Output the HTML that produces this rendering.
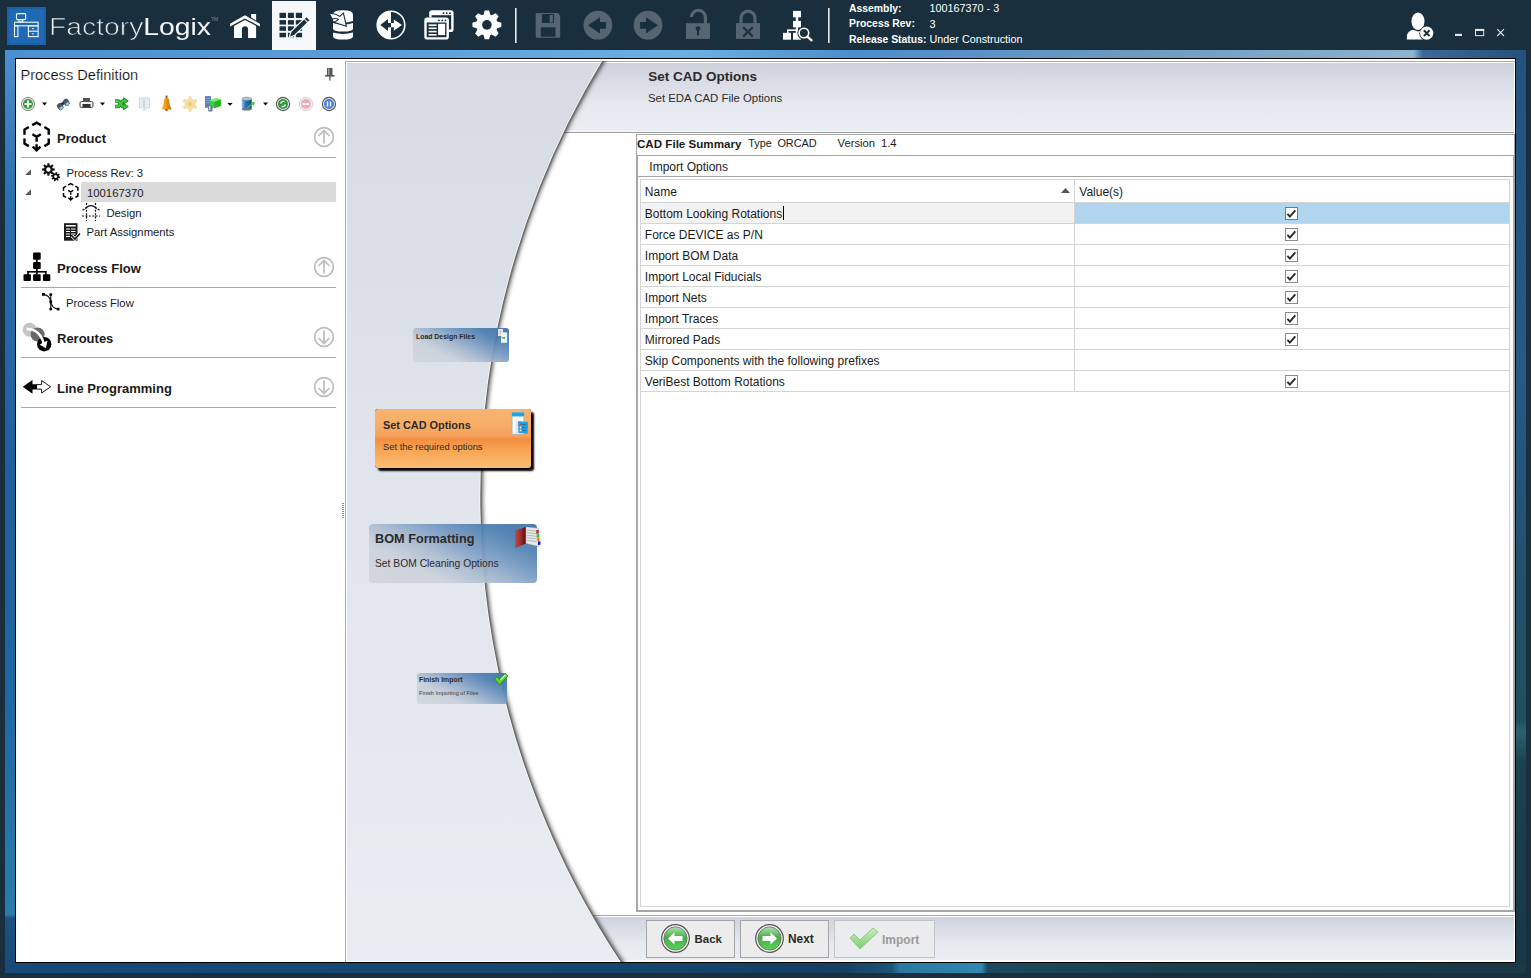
<!DOCTYPE html>
<html><head><meta charset="utf-8">
<style>
html,body{margin:0;padding:0;}
body{width:1531px;height:978px;overflow:hidden;position:relative;background:#1a2f3e;font-family:"Liberation Sans",sans-serif;}
.a{position:absolute;}
.t{position:absolute;line-height:1;white-space:nowrap;font-family:"Liberation Sans",sans-serif;}
.b{font-weight:bold;}
#win{left:15px;top:58px;width:1499px;height:903px;border:1px solid #000;background:#fff;}
.sep{position:absolute;height:1px;background:#a8a8a8;}
.tx{color:#1a1a1a;}
</style></head><body>
<!-- title bar -->
<div class="a" style="left:5px;top:50px;width:1521px;height:8px;background:linear-gradient(90deg,#4a8fd0 0%,#5ea3dc 30%,#6db0e0 45%,#4d8ccb 56%,#6d9cc0 75%,#8db3cf 92.6%,#3a6a98 93.2%,#24507c 100%)"></div>
<div class="a" style="left:5px;top:58px;width:10px;height:915px;background:linear-gradient(180deg,#4a8ed0 0%,#2a6fb0 15%,#1f5f9f 45%,#1f68a0 70%,#2a7cac 93.6%,#1a5283 94%,#174a78 100%)"></div>
<div class="a" style="left:1516px;top:58px;width:10px;height:915px;background:linear-gradient(180deg,#24527f 0%,#265a87 35%,#22506e 55%,#20505e 72.5%,#2a6272 73.5%,#1c4250 77%,#183646 100%)"></div>
<div class="a" style="left:5px;top:963px;width:1521px;height:10px;background:linear-gradient(90deg,#174a78 0%,#164670 40%,#173f62 55%,#1c5478 58.3%,#2a78a0 58.8%,#3288b0 64.2%,#1c4a5c 64.6%,#1a3c4c 80%,#1a3846 100%)"></div>
<div class="a" id="win"></div>


<svg class="a" style="left:0;top:0" width="1531" height="50" viewBox="0 0 1531 50">
 <!-- logo -->
 <rect x="7" y="7" width="39" height="38" fill="#1d5fa8"/>
 <rect x="9" y="9" width="35" height="34" fill="#1f69b3"/>
 <g fill="none" stroke="#f2f6fa" stroke-width="1.1">
  <rect x="16.5" y="13.6" width="9.2" height="6" rx="1"/>
  <rect x="19" y="19.6" width="3.6" height="2.3"/>
  <rect x="14.5" y="22.2" width="23.6" height="3.6"/>
  <rect x="14.5" y="25.8" width="3.4" height="10.8"/>
  <rect x="28.4" y="25.8" width="9.7" height="10.8"/>
  <line x1="28.4" y1="31.2" x2="38.1" y2="31.2"/>
 </g>
 <rect x="32" y="28.2" width="2" height="0.9" fill="#e8eef6"/>
 <rect x="32" y="33.4" width="2" height="0.9" fill="#e8eef6"/>
 <!-- active button -->
 <rect x="272" y="1" width="44" height="49" fill="#f7f8fb"/>
 <!-- home -->
 <g fill="#fff">
  <path d="M230 23.8 L244.9 15.2 L259.9 23.8 L259.9 26.4 L244.9 18.6 L230 26.4 Z"/>
  <path d="M251.1 13.9 L256.1 13.9 L256.1 20.4 L251.1 17.6 Z"/>
  <path d="M234 25.9 L244.9 20 L256.1 25.9 L256.1 37.9 L248.1 37.9 L248.1 29.3 A3.1 3.1 0 0 0 241.9 29.3 L241.9 37.9 L234 37.9 Z"/>
 </g>
 <!-- grid edit -->
 <g fill="#1a2f3e"><rect x="279.5" y="12.8" width="6.5" height="5.2"/><rect x="287.9" y="12.8" width="6.0" height="5.2"/><rect x="295.8" y="12.8" width="6.3" height="5.2"/><rect x="279.5" y="20.1" width="6.5" height="4.5"/><rect x="287.9" y="20.1" width="6.0" height="4.5"/><rect x="295.8" y="20.1" width="6.3" height="4.5"/><rect x="279.5" y="26.3" width="6.5" height="4.5"/><rect x="287.9" y="26.3" width="6.0" height="4.5"/><rect x="295.8" y="26.3" width="6.3" height="4.5"/><rect x="279.5" y="32.8" width="6.5" height="4.5"/><rect x="287.9" y="32.8" width="6.0" height="4.5"/><rect x="295.8" y="32.8" width="6.3" height="4.5"/></g>
 <path d="M290.00 36.60 L291.61 31.77 L304.21 19.57 L306.99 22.43 L294.39 34.63 Z" fill="#1a2f3e" stroke="#f8f9fb" stroke-width="2.4" stroke-linejoin="round"/>
 <path d="M304.92 18.87 L306.50 17.34 L309.29 20.20 L307.71 21.74 Z" fill="#1a2f3e" stroke="#f8f9fb" stroke-width="1.6" stroke-linejoin="round"/>
 <path d="M290.00 36.60 L291.61 31.77 L304.21 19.57 L306.99 22.43 L294.39 34.63 Z" fill="#1a2f3e"/>
 <path d="M304.92 18.87 L306.50 17.34 L309.29 20.20 L307.71 21.74 Z" fill="#1a2f3e"/>
 <!-- database -->
 <g fill="#fff">
  <path d="M333 14.5 Q333 10.2 343 10.2 Q353 10.2 353 14.5 L353 21 Q348 22.8 343 22.8 L333 21 Z"/>
  <path d="M333 23 Q338 24.8 343 24.8 Q348 24.8 353 23 L353 28.8 Q353 31.6 343 31.6 Q333 31.6 333 28.8 Z"/>
  <path d="M333 32.6 Q338 34 343 34 Q348 34 353 32.6 L353 36.2 Q353 39.6 343 39.6 Q333 39.6 333 36.2 Z"/>
 </g>
 <path d="M329.2 13.6 Q335 12.8 339.8 16.4 L343.4 12.8 L346.4 26.3 L334.6 22.4 L338.6 19.4 Q335.4 17.6 332.4 19.2 Z" fill="#fff" stroke="#1a2f3e" stroke-width="1.1" stroke-linejoin="round"/>
 <!-- arrows circle -->
 <circle cx="391" cy="25" r="13.8" fill="#1a2f3e" stroke="#fff" stroke-width="1.6"/>
 <path d="M391 11.2 A13.8 13.8 0 0 0 391 38.8 Z" fill="#fff"/>
 <path d="M380.3 25 L388 19 L388 23.1 L391 23.1 L391 27.2 L388 27.2 L388 31 Z" fill="#1a2f3e"/>
 <path d="M402 25 L393.8 19.4 L393.8 23.1 L391 23.1 L391 27.2 L393.8 27.2 L393.8 30.8 Z" fill="#fff"/>
 <!-- windows -->
 <g fill="none" stroke="#fff">
  <rect x="430.4" y="11.4" width="22" height="19.4" rx="1.6" stroke-width="2.4"/>
 </g>
 <rect x="424.3" y="17.5" width="24.6" height="22.1" rx="2" fill="#1a2f3e"/>
 <rect x="425.5" y="18.7" width="22.2" height="19.7" rx="1.6" fill="none" stroke="#fff" stroke-width="2.4"/>
 <rect x="425.5" y="18.7" width="22.2" height="3.8" fill="#fff"/>
 <rect x="430.4" y="11.4" width="22" height="3.8" fill="#fff"/>
 <g fill="#1a2f3e"><circle cx="443.6" cy="13.2" r="0.9"/><circle cx="446.8" cy="13.2" r="0.9"/><circle cx="450" cy="13.2" r="0.9"/>
 <circle cx="439" cy="20.4" r="0.9"/><circle cx="442.2" cy="20.4" r="0.9"/><circle cx="445.4" cy="20.4" r="0.9"/></g>
 <g fill="#fff"><rect x="428.6" y="24.4" width="8" height="1.6"/><rect x="428.6" y="27.5" width="8" height="1.6"/><rect x="428.6" y="30.8" width="8" height="1.6"/><rect x="428.6" y="34" width="8" height="1.6"/><rect x="438.1" y="23.8" width="7" height="11.3"/></g>
 <!-- gear -->
 <path d="M483.61 14.61 L484.72 10.46 L489.08 10.46 L490.19 14.61 L491.84 15.30 L495.57 13.15 L498.65 16.23 L496.50 19.96 L497.19 21.61 L501.34 22.72 L501.34 27.08 L497.19 28.19 L496.50 29.84 L498.65 33.57 L495.57 36.65 L491.84 34.50 L490.19 35.19 L489.08 39.34 L484.72 39.34 L483.61 35.19 L481.96 34.50 L478.23 36.65 L475.15 33.57 L477.30 29.84 L476.61 28.19 L472.46 27.08 L472.46 22.72 L476.61 21.61 L477.30 19.96 L475.15 16.23 L478.23 13.15 L481.96 15.30 Z" fill="#fff"/>
 <circle cx="486.9" cy="24.9" r="4.8" fill="#1a2f3e"/>
 <!-- separators -->
 <rect x="515" y="8" width="1.6" height="35" fill="#e8e8e8"/>
 <rect x="828" y="8" width="1.6" height="35" fill="#e8e8e8"/>
 <!-- save -->
 <path d="M535.7 14 Q535.7 13 536.7 13 L557.5 13 L560.2 15.7 L560.2 36.8 Q560.2 37.8 559.2 37.8 L536.7 37.8 Q535.7 37.8 535.7 36.8 Z" fill="#566571"/>
 <rect x="541.9" y="14" width="12.1" height="9" fill="#1a2f3e"/>
 <rect x="549.7" y="15" width="3.2" height="7.4" fill="#566571"/>
 <rect x="540.8" y="27.3" width="14.6" height="9.4" fill="#1a2f3e"/>
 <!-- back/forward -->
 <circle cx="597.9" cy="25.2" r="14.4" fill="#566571"/>
 <path d="M588 25.2 L600 17.3 L600 22.1 L605.9 22.1 L605.9 28.7 L600 28.7 L600 33.4 Z" fill="#1a2f3e"/>
 <circle cx="648" cy="25.2" r="14.4" fill="#566571"/>
 <path d="M658 25.2 L646 17.3 L646 22.1 L640.1 22.1 L640.1 28.7 L646 28.7 L646 33.4 Z" fill="#1a2f3e"/>
 <!-- unlock -->
 <path d="M691.4 17 A7 7 0 0 1 705.4 17.8 L705.4 24" fill="none" stroke="#566571" stroke-width="3.2"/>
 <rect x="686" y="23.2" width="24" height="15.7" fill="#566571"/>
 <circle cx="698" cy="28.6" r="2.4" fill="#1a2f3e"/>
 <rect x="697" y="29" width="2" height="6.5" fill="#1a2f3e"/>
 <!-- lock x -->
 <path d="M741 24 L741 18.2 A7 7 0 0 1 755 18.2 L755 24" fill="none" stroke="#566571" stroke-width="3.2"/>
 <rect x="736" y="23.2" width="24" height="15.7" fill="#566571"/>
 <path d="M743.2 27.3 L752.8 36.5 M752.8 27.3 L743.2 36.5" stroke="#1a2f3e" stroke-width="2.2"/>
 <!-- hierarchy search -->
 <g fill="#fff">
  <rect x="793" y="10.9" width="8" height="6.4"/>
  <rect x="795.8" y="17" width="2.4" height="4"/>
  <rect x="793" y="20.9" width="8" height="6.4"/>
  <rect x="795.8" y="27" width="2.4" height="6"/>
  <rect x="787" y="29.4" width="9" height="1.6"/>
  <rect x="787" y="30" width="1.6" height="3"/>
  <rect x="783" y="32.8" width="8" height="6.9"/>
  <rect x="793" y="32.8" width="8" height="6.9"/>
 </g>
 <circle cx="803.9" cy="33" r="6.6" fill="#1a2f3e"/>
 <circle cx="803.9" cy="33" r="4.8" fill="none" stroke="#fff" stroke-width="1.6"/>
 <path d="M807.4 36.6 L811.6 40.4" stroke="#fff" stroke-width="2.2" stroke-linecap="round"/>
 <!-- user -->
 <ellipse cx="1418" cy="21.3" rx="6.5" ry="8.8" fill="#fff"/>
 <path d="M1406.8 39.5 L1407 35 Q1408 31 1413 29.8 L1418 31.5 L1423 29.8 Q1428 31 1429 35 L1429 39.5 Z" fill="#fff"/>
 <circle cx="1426.7" cy="33.2" r="7.4" fill="#1a2f3e"/>
 <circle cx="1426.7" cy="33.2" r="6.6" fill="#fff"/>
 <path d="M1423.8 30.3 L1429.6 36.1 M1429.6 30.3 L1423.8 36.1" stroke="#1a2f3e" stroke-width="2"/>
 <!-- window controls -->
 <rect x="1455" y="33.8" width="7" height="2.2" fill="#e2e2e2"/>
 <rect x="1475.5" y="29.4" width="8.2" height="6.2" fill="none" stroke="#e2e2e2" stroke-width="1"/>
 <rect x="1475" y="29" width="9.2" height="2" fill="#e2e2e2"/>
 <path d="M1497.2 29.2 L1504 36 M1504 29.2 L1497.2 36" stroke="#e2e2e2" stroke-width="1.1"/>
</svg>
<div class="t" style="left:48.5px;top:16px;font-size:23.4px;color:#ececec;transform:scaleX(1.21);transform-origin:0 0"><span style="-webkit-text-stroke:0.7px #1a2f3e">Factory</span><span style="color:#f6f6f6">Logix</span></div>
<div class="t" style="left:211px;top:17px;font-size:5px;color:#888">TM</div>

<!-- title texts -->
<div class="t b" style="left:849px;top:3.9px;font-size:10.4px;color:#fff">Assembly:</div>
<div class="t b" style="left:849px;top:19.2px;font-size:10.4px;color:#fff">Process Rev:</div>
<div class="t b" style="left:849px;top:34.5px;font-size:10.4px;color:#fff">Release Status:</div>
<div class="t" style="left:929.5px;top:3.3px;font-size:10.8px;color:#fff">100167370 - 3</div>
<div class="t" style="left:929.5px;top:18.9px;font-size:10.8px;color:#fff">3</div>
<div class="t" style="left:929.5px;top:34.1px;font-size:10.8px;color:#fff">Under Construction</div>

<!-- left panel -->
<div class="t" style="left:20.5px;top:67.6px;font-size:14.6px;color:#000;-webkit-text-stroke:0.22px #fff">Process Definition</div>
<div class="t b tx" style="left:57px;top:132px;font-size:13px">Product</div>
<div class="sep" style="left:21px;top:157px;width:315px"></div>
<div class="a" style="left:81px;top:182px;width:255px;height:20px;background:#dadada"></div>
<div class="t tx" style="left:66.5px;top:168.1px;font-size:11.3px">Process Rev: 3</div>
<div class="t tx" style="left:87px;top:187.6px;font-size:11.3px">100167370</div>
<div class="t tx" style="left:106.4px;top:207.8px;font-size:11.3px">Design</div>
<div class="t tx" style="left:86.5px;top:227.4px;font-size:11.3px">Part Assignments</div>
<div class="t b tx" style="left:57px;top:261.8px;font-size:13px">Process Flow</div>
<div class="sep" style="left:21px;top:287px;width:315px"></div>
<div class="t tx" style="left:66px;top:297.9px;font-size:11.3px">Process Flow</div>
<div class="t b tx" style="left:57px;top:331.7px;font-size:13px">Reroutes</div>
<div class="sep" style="left:21px;top:357px;width:315px"></div>
<div class="t b tx" style="left:57px;top:381.7px;font-size:13px">Line Programming</div>
<div class="sep" style="left:21px;top:407px;width:315px"></div>

<svg class="a" style="left:16px;top:59px" width="329" height="360" viewBox="16 59 329 360">
 <!-- pin -->
 <g fill="#555"><rect x="327" y="68" width="5.5" height="7.5"/><rect x="325" y="75" width="9.5" height="1.6"/><rect x="329.2" y="76" width="1.3" height="4.5"/></g>
 <rect x="328" y="68.5" width="1.5" height="6.5" fill="#999"/>
 <!-- toolbar -->
 <circle cx="28" cy="104" r="6.6" fill="#e8e8e8" stroke="#888" stroke-width="1"/>
 <circle cx="28" cy="104" r="5" fill="#2da02d"/>
 <path d="M28 100.5 L28 107.5 M24.5 104 L31.5 104" stroke="#fff" stroke-width="2"/>
 <path d="M42 102.5 L47 102.5 L44.5 105.5 Z" fill="#000"/>
 <g transform="translate(63 104) rotate(-35)"><rect x="-6.5" y="-3" width="5.5" height="7" rx="2.2" fill="#4a5a68"/><rect x="1" y="-3" width="5.5" height="7" rx="2.2" fill="#4a5a68"/><rect x="-5.5" y="1" width="3.5" height="2.5" fill="#8cc4ea"/><rect x="2" y="1" width="3.5" height="2.5" fill="#8cc4ea"/><rect x="-1.5" y="-2" width="3" height="3" fill="#333"/></g>
 <rect x="80" y="101.5" width="13" height="6" rx="1.5" fill="#f0f0f0" stroke="#444" stroke-width="1"/>
 <rect x="83" y="98" width="7" height="4" fill="#555"/>
 <rect x="82.5" y="104" width="8" height="3" fill="#333"/>
 <path d="M100 102.5 L105 102.5 L102.5 105.5 Z" fill="#000"/>
 <g stroke="#128a12" stroke-width="3.6" fill="none" stroke-linejoin="round"><path d="M115 101 L118.5 101 L122.5 106.5 L124.5 106.5 M115 106.5 L118.5 106.5 L122.5 101 L124.5 101"/></g>
 <path d="M123.5 97.8 L128.3 101 L123.5 104.2 Z M123.5 103.3 L128.3 106.5 L123.5 109.7 Z" fill="#3cbc3c" stroke="#128a12" stroke-width="0.9" stroke-linejoin="round"/>
 <g stroke="#4cc84c" stroke-width="1.8" fill="none" stroke-linejoin="round"><path d="M115 101 L118.5 101 L122.5 106.5 L124.5 106.5 M115 106.5 L118.5 106.5 L122.5 101 L124.5 101"/></g>
 <rect x="139.5" y="98" width="10" height="10" fill="#e6ecf4" stroke="#c8d2de" stroke-width="0.8"/>
 <rect x="143" y="100" width="2" height="7" fill="#c9d3de"/>
 <path d="M144.5 108 L144.5 110 M142 111 L144.5 109 L147 111" stroke="#ccc" stroke-width="0.8" fill="none"/>
 <defs><linearGradient id="gbell" x1="0" y1="0" x2="1" y2="0"><stop offset="0" stop-color="#f8c040"/><stop offset="0.4" stop-color="#f0a010"/><stop offset="1" stop-color="#c06000"/></linearGradient></defs>
 <path d="M166.5 97.5 Q164 97.8 163.8 101.5 Q163.6 105.5 162.2 107.5 Q161.5 108.5 161.5 109.6 L171.5 109.6 Q171.5 108.5 170.8 107.5 Q169.4 105.5 169.2 101.5 Q169 97.8 166.5 97.5 Z" fill="url(#gbell)"/>
 <rect x="165.6" y="95.6" width="1.8" height="2.2" fill="#7a4a10"/>
 <ellipse cx="166.5" cy="110" rx="1.4" ry="0.9" fill="#a05000"/>
 <path d="M188.19 98.70 L188.45 96.36 L191.55 96.36 L191.81 98.70 L193.68 99.78 L195.85 98.84 L197.40 101.52 L195.50 102.92 L195.50 105.08 L197.40 106.48 L195.85 109.16 L193.68 108.22 L191.81 109.30 L191.55 111.64 L188.45 111.64 L188.19 109.30 L186.32 108.22 L184.15 109.16 L182.60 106.48 L184.50 105.08 L184.50 102.92 L182.60 101.52 L184.15 98.84 L186.32 99.78 Z" fill="#f5dfa8"/>
 <circle cx="190" cy="104" r="2" fill="#e8c978"/>
 <rect x="205" y="96.1" width="6" height="11.7" fill="#5a80c8"/>
 <g fill="#9ab0d8"><rect x="206" y="98" width="4" height="0.6"/><rect x="206" y="100" width="4" height="0.6"/><rect x="206" y="102" width="4" height="0.6"/></g>
 <path d="M209.8 100.5 L216 98 L220.8 99.5 L220.8 105.8 L214.5 108.2 L209.8 106.5 Z" fill="#2ed82e"/>
 <path d="M209.8 100.5 L216 98 L220.8 99.5 L214.5 101.8 Z" fill="#7cf07c"/>
 <path d="M214.5 101.8 L220.8 99.5 L220.8 105.8 L214.5 108.2 Z" fill="#1cb81c"/>
 <path d="M214.5 101.8 L214.5 108.2" stroke="#888" stroke-width="0.5"/>
 <rect x="208.2" y="105" width="4.4" height="6.6" rx="1" fill="#6f8294"/>
 <rect x="209" y="106" width="1.4" height="4" fill="#c8d4de"/>
 <path d="M227.4 103 L232.6 103 L230 105.8 Z" fill="#000"/>
 <defs><linearGradient id="gdb" x1="0" y1="0" x2="1" y2="0"><stop offset="0" stop-color="#8ccaf0"/><stop offset="0.35" stop-color="#2a78b8"/><stop offset="1" stop-color="#1a4a80"/></linearGradient></defs>
 <rect x="241.8" y="98.5" width="9.9" height="11" rx="1.5" fill="url(#gdb)"/>
 <ellipse cx="246.75" cy="98.8" rx="4.95" ry="1.7" fill="#b8c4cc" stroke="#6a7a88" stroke-width="0.5"/>
 <ellipse cx="246.75" cy="109.3" rx="4.95" ry="1.2" fill="#5a7890"/>
 <path d="M246.5 107.8 Q249 104.5 252.5 103.4 L251.6 101.6 L255 102.4 L253.6 105.8 L252.9 104.4 Q249.8 105.8 248 108.4 Z" fill="#2ec82e"/>
 <path d="M263 102.5 L268 102.5 L265.5 105.5 Z" fill="#000"/>
 <circle cx="283" cy="104" r="6.6" fill="#e8e8e8" stroke="#555" stroke-width="1.1"/>
 <circle cx="283" cy="104" r="5" fill="#2d9a3a"/>
 <path d="M280.5 103.5 Q281.5 100.8 284.5 101.5 M285.5 104.5 Q284.5 107.2 281.5 106.5" stroke="#fff" stroke-width="1.4" fill="none"/>
 <circle cx="306" cy="104" r="6.6" fill="#f2f2f2" stroke="#d0d0d0" stroke-width="1"/>
 <circle cx="306" cy="104" r="5" fill="#f4a8b8"/>
 <rect x="302.5" y="103" width="7" height="2" fill="#fff"/>
 <circle cx="329" cy="104" r="6.6" fill="#e8e8e8" stroke="#555" stroke-width="1.1"/>
 <circle cx="329" cy="104" r="5" fill="#4a7ee0"/>
 <rect x="326.8" y="101.5" width="1.4" height="5" fill="#fff"/><rect x="329.8" y="101.5" width="1.4" height="5" fill="#fff"/>

 <!-- product section icon -->
 <path d="M32.24 125.12 L36.60 122.60 L40.96 125.12 M44.36 127.08 L48.72 129.60 L48.72 134.64 M48.72 138.56 L48.72 143.60 L44.36 146.12 M28.84 146.12 L24.48 143.60 L24.48 138.56 M24.48 134.64 L24.48 129.60 L28.84 127.08 M36.60 144.30 L36.60 150.32 M32.68 146.68 L36.60 150.32 L40.52 146.68 M32.40 134.22 L36.60 136.88 L40.80 134.22 M36.60 136.88 L36.60 141.64" fill="none" stroke="#000" stroke-width="2.4" stroke-linejoin="miter"/>
 <!-- circle arrows -->
 <g fill="none" stroke="#bdbdbd" stroke-width="1.7">
  <circle cx="324" cy="137" r="9.4"/><path d="M324 143.5 L324 130.5 M318.5 136 L324 130.5 L329.5 136"/>
  <circle cx="324" cy="267" r="9.4"/><path d="M324 273.5 L324 260.5 M318.5 266 L324 260.5 L329.5 266"/>
  <circle cx="324" cy="337" r="9.4"/><path d="M324 330.5 L324 343.5 M318.5 338 L324 343.5 L329.5 338"/>
  <circle cx="324" cy="387" r="9.4"/><path d="M324 380.5 L324 393.5 M318.5 388 L324 393.5 L329.5 388"/>
 </g>
 <!-- tree -->
 <path d="M31 169.3 L31 175 L25.2 175 Z" fill="#5a5a5a"/>
 <path d="M31 189.2 L31 195 L25.2 195 Z" fill="#5a5a5a"/>
 <path d="M47.27 165.25 L47.38 163.18 L49.42 163.18 L49.53 165.25 L50.61 165.69 L52.15 164.31 L53.59 165.75 L52.21 167.29 L52.65 168.37 L54.72 168.48 L54.72 170.52 L52.65 170.63 L52.21 171.71 L53.59 173.25 L52.15 174.69 L50.61 173.31 L49.53 173.75 L49.42 175.82 L47.38 175.82 L47.27 173.75 L46.19 173.31 L44.65 174.69 L43.21 173.25 L44.59 171.71 L44.15 170.63 L42.08 170.52 L42.08 168.48 L44.15 168.37 L44.59 167.29 L43.21 165.75 L44.65 164.31 L46.19 165.69 Z" fill="#111"/>
 <circle cx="48.4" cy="169.5" r="2.2" fill="#fff"/>
 <path d="M55.34 173.41 L55.74 172.00 L57.26 172.31 L57.08 173.76 L57.67 174.16 L58.95 173.45 L59.81 174.74 L58.65 175.64 L58.79 176.34 L60.20 176.74 L59.89 178.26 L58.44 178.08 L58.04 178.67 L58.75 179.95 L57.46 180.81 L56.56 179.65 L55.86 179.79 L55.46 181.20 L53.94 180.89 L54.12 179.44 L53.53 179.04 L52.25 179.75 L51.39 178.46 L52.55 177.56 L52.41 176.86 L51.00 176.46 L51.31 174.94 L52.76 175.12 L53.16 174.53 L52.45 173.25 L53.74 172.39 L54.64 173.55 Z" fill="#111"/>
 <circle cx="55.6" cy="176.6" r="1.5" fill="#fff"/>
 <path d="M68.11 184.99 L70.70 183.50 L73.29 184.99 M75.30 186.16 L77.89 187.65 L77.89 190.64 M77.89 192.96 L77.89 195.95 L75.30 197.44 M66.10 197.44 L63.51 195.95 L63.51 192.96 M63.51 190.64 L63.51 187.65 L66.10 186.16 M70.70 196.37 L70.70 199.93 M68.38 197.78 L70.70 199.93 L73.02 197.78 M68.21 190.39 L70.70 191.97 L73.19 190.39 M70.70 191.97 L70.70 194.79" fill="none" stroke="#000" stroke-width="1.5" stroke-linejoin="miter"/>
 <g stroke="#111" stroke-width="1.2" fill="none" stroke-dasharray="2 1.4">
  <path d="M86.5 203 L86.5 221 M95.5 203 L95.5 221 M82 216 L100 216"/>
 </g>
 <path d="M82.5 210.2 L86.5 207.6 A6 6 0 0 1 95.5 207.6 L99.6 210.2" stroke="#111" stroke-width="1.3" fill="none"/><path d="M84 208.4 L85 208.8 M97 208.8 L98 208.4" stroke="#fff" stroke-width="1.2"/>
 <rect x="64" y="223.2" width="13.5" height="17.5" fill="#1a1a1a"/>
 <rect x="65.8" y="225" width="10" height="1.5" fill="#fff"/>
 <g fill="#fff"><rect x="66" y="228.5" width="4" height="1"/><rect x="71" y="228.5" width="4.5" height="1"/><rect x="66" y="231" width="4" height="1"/><rect x="71" y="231" width="4.5" height="1"/><rect x="66" y="233.5" width="4" height="1"/><rect x="71" y="233.5" width="4.5" height="1"/><rect x="66" y="236" width="4" height="1"/></g>
 <path d="M72 236 L75 239 L80 233.5" stroke="#fff" stroke-width="3.2" fill="none"/>
 <path d="M72 236 L75 239 L80 233.5" stroke="#111" stroke-width="1.6" fill="none"/>
 <!-- process flow icon -->
 <g fill="#000">
  <rect x="33.1" y="252.5" width="7.6" height="7.2" rx="0.8"/>
  <rect x="35.9" y="259" width="1.8" height="4"/>
  <rect x="33.1" y="262.1" width="7.6" height="7" rx="0.8"/>
  <rect x="35.9" y="268.5" width="1.8" height="6"/>
  <rect x="27.2" y="271" width="19.4" height="1.6"/>
  <rect x="27.2" y="271" width="1.6" height="4"/>
  <rect x="45" y="271" width="1.6" height="4"/>
  <rect x="23.5" y="274.2" width="7.4" height="6.9" rx="0.8"/>
  <rect x="33.1" y="274.2" width="7.6" height="6.9" rx="0.8"/>
  <rect x="42.9" y="274.2" width="7.4" height="6.9" rx="0.8"/>
 </g>
 <!-- sub process flow icon -->
 <path d="M43.4 294.4 Q49.5 295 50.75 301.8 M50.75 294.4 L50.75 309.1 M50.75 301.8 Q52 308.4 58.1 309" stroke="#111" stroke-width="1.1" fill="none"/>
 <g fill="#000"><rect x="41.9" y="293" width="3" height="2.8"/><circle cx="50.75" cy="294.4" r="1.5"/><ellipse cx="50.75" cy="301.8" rx="1.5" ry="1.9"/><circle cx="50.75" cy="309.1" r="1.5"/><circle cx="58.1" cy="309" r="1.6"/></g>
 <!-- reroutes -->
 <circle cx="29.7" cy="329.7" r="7" fill="#c4c4c4"/>
 <circle cx="37.6" cy="334.5" r="7" fill="#686868"/>
 <circle cx="44.2" cy="344.2" r="7.2" fill="#000"/>
 <path d="M26.5 329 Q35.5 328.5 40.5 336 Q43 340 43.8 344" stroke="#fff" stroke-width="2.6" fill="none"/>
 <path d="M39.6 344.4 L45.9 348.2 L47.5 340.6 Z" fill="#fff"/>
 <!-- line programming -->
 <path d="M22.7 386.8 L32.5 379.9 L32.5 384.2 L37 384.2 L37 389.5 L32.5 389.5 L32.5 393.8 Z" fill="#000"/>
 <path d="M37 384.6 L41.6 384.6 L41.6 380.6 L50.6 386.8 L41.6 393 L41.6 389.1 L37 389.1" fill="#fff" stroke="#000" stroke-width="0.9"/>
</svg>

<div class="a" style="left:342px;top:503px;width:2px;height:15px;background:repeating-linear-gradient(180deg,#8a8a8a 0,#8a8a8a 1px,transparent 1px,transparent 2px)"></div>


<svg class="a" style="left:345px;top:61px" width="1170" height="901" viewBox="345 61 1170 901">
 <defs>
  <linearGradient id="gOut" x1="0" y1="61" x2="0" y2="962" gradientUnits="userSpaceOnUse">
   <stop offset="0" stop-color="#d6dae3"/><stop offset="0.5" stop-color="#e1e5ec"/><stop offset="1" stop-color="#e9ecf1"/>
  </linearGradient>
  <linearGradient id="gHdr" x1="0" y1="62" x2="0" y2="132" gradientUnits="userSpaceOnUse">
   <stop offset="0" stop-color="#cdd1dc"/><stop offset="0.6" stop-color="#e5e8ee"/><stop offset="1" stop-color="#eaedf1"/>
  </linearGradient>
  <linearGradient id="gFtr" x1="0" y1="916" x2="0" y2="962" gradientUnits="userSpaceOnUse">
   <stop offset="0" stop-color="#cdd2dd"/><stop offset="0.6" stop-color="#e6e9ee"/><stop offset="1" stop-color="#eaedf1"/>
  </linearGradient>
  <clipPath id="arc"><circle cx="1319.4" cy="496.8" r="838.3"/></clipPath>
  <filter id="blur" x="-10%" y="-10%" width="120%" height="120%"><feGaussianBlur stdDeviation="2.6"/></filter>
 </defs>
 <rect x="345" y="61" width="1170" height="901" fill="#a8a8a8"/>
 <rect x="346" y="62" width="1169" height="900" fill="#ffffff"/>
 <rect x="347" y="63" width="1167" height="898" fill="url(#gOut)"/>
 <g clip-path="url(#arc)">
  <rect x="347" y="63" width="1167" height="68" fill="url(#gHdr)"/>
  <rect x="347" y="131" width="1167" height="1" fill="#fbfbfc"/>
  <rect x="347" y="132" width="1167" height="1" fill="#9c9c9c"/>
  <rect x="347" y="133" width="1167" height="1" fill="#c4c4c4"/>
  <rect x="347" y="133" width="1167" height="782" fill="#ffffff"/>
  <rect x="347" y="915" width="1167" height="1" fill="#a8a8a8"/>
  <rect x="347" y="916" width="1167" height="45" fill="url(#gFtr)"/>
  <rect x="347" y="916" width="1167" height="1" fill="#ffffff"/>
  <rect x="347" y="960" width="1167" height="1" fill="#f8f9fa"/>
  <circle cx="1319.4" cy="496.8" r="841" fill="none" stroke="#000" stroke-opacity="0.85" stroke-width="7" filter="url(#blur)"/>
 </g>
 <circle cx="1319.4" cy="496.8" r="839.3" fill="none" stroke="#ffffff" stroke-width="1.2"/>
 <circle cx="1319.4" cy="496.8" r="838.5" fill="none" stroke="#6a6a6a" stroke-width="1.3"/>
</svg>

<!-- wizard header -->
<div class="t b" style="left:648.3px;top:70.2px;font-size:13.5px;color:#2b2b2b">Set CAD Options</div>
<div class="t" style="left:648px;top:93.2px;font-size:11.4px;color:#2b2b2b">Set EDA CAD File Options</div>
<!-- group box -->
<div class="a" style="left:636px;top:134px;width:877px;height:776px;border:1px solid #a6a6a6;background:#fff"></div>
<div class="a" style="left:637px;top:155px;width:875px;height:754px;border:1px solid #a6a6a6;border-left-width:1px"></div>
<div class="a" style="left:637px;top:176px;width:876px;height:1px;background:#a6a6a6"></div>
<div class="t b" style="left:637px;top:137.5px;font-size:11.6px;color:#1a1a1a">CAD File Summary</div>
<div class="t" style="left:748.2px;top:137.8px;font-size:10.9px;color:#1a1a1a">Type</div>
<div class="t" style="left:777.4px;top:137.8px;font-size:10.9px;color:#1a1a1a">ORCAD</div>
<div class="t" style="left:837.6px;top:137.8px;font-size:11.2px;color:#1a1a1a">Version</div>
<div class="t" style="left:881px;top:137.8px;font-size:11.2px;color:#1a1a1a">1.4</div>
<div class="t" style="left:649.3px;top:160.8px;font-size:12px;color:#1a1a1a">Import Options</div>
<!-- grid -->
<div class="a" style="left:640px;top:179px;width:868px;height:726px;border:1px solid #d4d4d4;background:#fff"></div>
<div class="t" style="left:644.8px;top:185.7px;font-size:12px;color:#1a1a1a">Name</div>
<div class="t" style="left:1079.3px;top:185.7px;font-size:12px;color:#1a1a1a">Value(s)</div>
<svg class="a" style="left:1060px;top:187px" width="11" height="7"><path d="M1 6 L5.5 1 L10 6 Z" fill="#555"/></svg>
<div class="a" style="left:641px;top:202px;width:868px;height:1px;background:#d4d4d4"></div>
<div class="a" style="left:1074px;top:180px;width:1px;height:211px;background:#d4d4d4"></div>
<div class="a" style="left:641px;top:203px;width:433px;height:20px;background:#f2f2f2"></div>
<div class="a" style="left:1075px;top:203px;width:434px;height:20px;background:#b1d5ee"></div>
<div class="a" style="left:641px;top:223px;width:868px;height:1px;background:#d4d4d4"></div>
<div class="t" style="left:644.8px;top:207.7px;font-size:12px;color:#1a1a1a">Bottom Looking Rotations</div>
<svg class="a" style="left:1285px;top:207px" width="13" height="13"><rect x="0.5" y="0.5" width="12" height="12" fill="#fff" stroke="#6b7b88"/><path d="M2.4 6.8 L4.9 9.6 L10.3 3.4" fill="none" stroke="#2a2a2a" stroke-width="1.9"/></svg>
<div class="a" style="left:641px;top:244px;width:868px;height:1px;background:#d4d4d4"></div>
<div class="t" style="left:644.8px;top:228.7px;font-size:12px;color:#1a1a1a">Force DEVICE as P/N</div>
<svg class="a" style="left:1285px;top:228px" width="13" height="13"><rect x="0.5" y="0.5" width="12" height="12" fill="#fff" stroke="#8a8a8a"/><path d="M2.4 6.8 L4.9 9.6 L10.3 3.4" fill="none" stroke="#2a2a2a" stroke-width="1.9"/></svg>
<div class="a" style="left:641px;top:265px;width:868px;height:1px;background:#d4d4d4"></div>
<div class="t" style="left:644.8px;top:249.7px;font-size:12px;color:#1a1a1a">Import BOM Data</div>
<svg class="a" style="left:1285px;top:249px" width="13" height="13"><rect x="0.5" y="0.5" width="12" height="12" fill="#fff" stroke="#8a8a8a"/><path d="M2.4 6.8 L4.9 9.6 L10.3 3.4" fill="none" stroke="#2a2a2a" stroke-width="1.9"/></svg>
<div class="a" style="left:641px;top:286px;width:868px;height:1px;background:#d4d4d4"></div>
<div class="t" style="left:644.8px;top:270.7px;font-size:12px;color:#1a1a1a">Import Local Fiducials</div>
<svg class="a" style="left:1285px;top:270px" width="13" height="13"><rect x="0.5" y="0.5" width="12" height="12" fill="#fff" stroke="#8a8a8a"/><path d="M2.4 6.8 L4.9 9.6 L10.3 3.4" fill="none" stroke="#2a2a2a" stroke-width="1.9"/></svg>
<div class="a" style="left:641px;top:307px;width:868px;height:1px;background:#d4d4d4"></div>
<div class="t" style="left:644.8px;top:291.7px;font-size:12px;color:#1a1a1a">Import Nets</div>
<svg class="a" style="left:1285px;top:291px" width="13" height="13"><rect x="0.5" y="0.5" width="12" height="12" fill="#fff" stroke="#8a8a8a"/><path d="M2.4 6.8 L4.9 9.6 L10.3 3.4" fill="none" stroke="#2a2a2a" stroke-width="1.9"/></svg>
<div class="a" style="left:641px;top:328px;width:868px;height:1px;background:#d4d4d4"></div>
<div class="t" style="left:644.8px;top:312.7px;font-size:12px;color:#1a1a1a">Import Traces</div>
<svg class="a" style="left:1285px;top:312px" width="13" height="13"><rect x="0.5" y="0.5" width="12" height="12" fill="#fff" stroke="#8a8a8a"/><path d="M2.4 6.8 L4.9 9.6 L10.3 3.4" fill="none" stroke="#2a2a2a" stroke-width="1.9"/></svg>
<div class="a" style="left:641px;top:349px;width:868px;height:1px;background:#d4d4d4"></div>
<div class="t" style="left:644.8px;top:333.7px;font-size:12px;color:#1a1a1a">Mirrored Pads</div>
<svg class="a" style="left:1285px;top:333px" width="13" height="13"><rect x="0.5" y="0.5" width="12" height="12" fill="#fff" stroke="#8a8a8a"/><path d="M2.4 6.8 L4.9 9.6 L10.3 3.4" fill="none" stroke="#2a2a2a" stroke-width="1.9"/></svg>
<div class="a" style="left:641px;top:370px;width:868px;height:1px;background:#d4d4d4"></div>
<div class="t" style="left:644.8px;top:354.7px;font-size:12px;color:#1a1a1a">Skip Components with the following prefixes</div>
<div class="a" style="left:641px;top:391px;width:868px;height:1px;background:#d4d4d4"></div>
<div class="t" style="left:644.8px;top:375.7px;font-size:12px;color:#1a1a1a">VeriBest Bottom Rotations</div>
<svg class="a" style="left:1285px;top:375px" width="13" height="13"><rect x="0.5" y="0.5" width="12" height="12" fill="#fff" stroke="#8a8a8a"/><path d="M2.4 6.8 L4.9 9.6 L10.3 3.4" fill="none" stroke="#2a2a2a" stroke-width="1.9"/></svg>
<div class="a" style="left:782.5px;top:206px;width:1px;height:14px;background:#000"></div>
<!-- footer buttons -->
<div class="a" style="left:646px;top:920px;width:87px;height:36px;border:1px solid #a4a4a4;background:#ececec"><svg width="29" height="29" viewBox="0 0 29 29" style="position:absolute;left:14px;top:3px">
<defs><linearGradient id="ggl" x1="0" y1="0" x2="0" y2="1"><stop offset="0" stop-color="#b4dcb4"/><stop offset="0.45" stop-color="#44b044"/><stop offset="1" stop-color="#5ad25a"/></linearGradient></defs>
<circle cx="14.5" cy="14.5" r="13.8" fill="#f4f4f4" stroke="#555" stroke-width="1.2"/>
<circle cx="14.5" cy="14.5" r="11.6" fill="url(#ggl)" stroke="#6a6a6a" stroke-width="0.8"/>
<path d="M7 14.5 L13.5 8.5 L13.5 12 L21.5 12 L21.5 17 L13.5 17 L13.5 20.5 Z" fill="#fff"/></svg></div>
<div class="t b" style="left:694.6px;top:934px;font-size:11.4px;color:#2a2a2a">Back</div>
<div class="a" style="left:740px;top:920px;width:87px;height:36px;border:1px solid #a4a4a4;background:#ececec"><svg width="29" height="29" viewBox="0 0 29 29" style="position:absolute;left:14px;top:3px">
<defs><linearGradient id="ggr" x1="0" y1="0" x2="0" y2="1"><stop offset="0" stop-color="#b4dcb4"/><stop offset="0.45" stop-color="#44b044"/><stop offset="1" stop-color="#5ad25a"/></linearGradient></defs>
<circle cx="14.5" cy="14.5" r="13.8" fill="#f4f4f4" stroke="#555" stroke-width="1.2"/>
<circle cx="14.5" cy="14.5" r="11.6" fill="url(#ggr)" stroke="#6a6a6a" stroke-width="0.8"/>
<path d="M22 14.5 L15.5 8.5 L15.5 12 L7.5 12 L7.5 17 L15.5 17 L15.5 20.5 Z" fill="#fff"/></svg></div>
<div class="t b" style="left:788px;top:934px;font-size:11.9px;color:#2a2a2a">Next</div>
<div class="a" style="left:834px;top:920px;width:99px;height:36px;border:1px solid #c4c4c4;background:#ebecee"></div>
<svg class="a" style="left:849px;top:927px" width="30" height="24" viewBox="0 0 30 24"><defs><linearGradient id="gchk" x1="0" y1="0" x2="0" y2="1"><stop offset="0" stop-color="#c8ecc0"/><stop offset="1" stop-color="#7ccf70"/></linearGradient></defs><path d="M1 11 L5 7 L11 13 L24 1 L29 5 L11 22 Z" fill="url(#gchk)" stroke="#8cc884" stroke-width="1"/></svg>
<div class="t b" style="left:882px;top:933.7px;font-size:12px;color:#9a9a9a">Import</div>
<!-- wizard cards -->
<div class="a" style="left:413px;top:328px;width:96px;height:34px;border-radius:3px;background:linear-gradient(26deg,#d0d5de 0%,#cbd1db 28%,#aabbd0 44%,#7c9dc4 60%,#4b7db0 80%,#3a6da6 100%);opacity:.92"></div>
<div class="t b" style="left:416px;top:334px;font-size:6.9px;color:#2a2a2a">Load Design Files</div>
<div class="a" style="left:375px;top:409px;width:156px;height:59px;border-radius:3px;background:#000;box-shadow:3px 3px 2px #000;transform:translate(0px,0px)"></div>
<div class="a" style="left:375px;top:409px;width:156px;height:59px;border-radius:3px;background:linear-gradient(180deg,#f8b46f 0%,#f7ac66 30%,#f6a05a 46%,#f38e40 51%,#f8a656 72%,#fdbd74 100%)"></div>
<div class="t b" style="left:383px;top:419.6px;font-size:10.9px;color:#2b2b2b">Set CAD Options</div>
<div class="t" style="left:383px;top:441.5px;font-size:9.4px;color:#2b2b2b">Set the required options</div>
<div class="a" style="left:369px;top:524px;width:168px;height:59px;border-radius:4px;background:linear-gradient(26deg,#d0d5de 0%,#cbd1db 28%,#aabbd0 44%,#7c9dc4 60%,#4b7db0 80%,#3a6da6 100%);opacity:.92"></div>
<div class="t b" style="left:375px;top:533.3px;font-size:12.7px;color:#2b2b2b">BOM Formatting</div>
<div class="t" style="left:375px;top:559px;font-size:10.3px;color:#2b2b2b">Set BOM Cleaning Options</div>
<div class="a" style="left:417px;top:673px;width:90px;height:31px;border-radius:3px;background:linear-gradient(26deg,#d0d5de 0%,#cbd1db 28%,#aabbd0 44%,#7c9dc4 60%,#4b7db0 80%,#3a6da6 100%);opacity:.92"></div>
<div class="t b" style="left:419px;top:676.8px;font-size:6.9px;color:#2b2b2b">Finish Import</div>
<div class="t" style="left:419px;top:690.5px;font-size:5.6px;color:#3b3b3b">Finish Importing of Files</div>

<svg class="a" style="left:490px;top:325px" width="56" height="370" viewBox="490 325 56 370">
 <!-- load design files icon -->
 <rect x="498" y="329" width="5" height="7" fill="#e4e4e4"/>
 <rect x="499.5" y="330.5" width="2" height="4.5" fill="#c8c8c8"/>
 <rect x="501" y="332.4" width="6.1" height="10.4" fill="#eef4fc"/>
 <path d="M500.2 336.2 L503.5 337.6 L505 336.8 L504.6 339.3 L502.8 338.6 Z" fill="#22b030"/>
</svg>
<svg class="a" style="left:505px;top:405px" width="45" height="150" viewBox="505 405 45 150">
 <!-- set cad options icon -->
 <rect x="512" y="412.5" width="12" height="21.9" fill="#dfe3e8" stroke="#9aa" stroke-width="0.5"/>
 <rect x="512" y="412.5" width="12" height="3.8" fill="#18a6e6"/>
 <rect x="513" y="417" width="2.6" height="16.5" fill="#fff"/>
 <rect x="516.5" y="417" width="6.5" height="5" fill="#fff"/>
 <path d="M518 421.1 L527.9 422 L527.9 433.6 L518.6 433 Z" fill="#25a0e0"/>
 <circle cx="520.6" cy="424.4" r="0.9" fill="#e04040"/>
 <circle cx="520.6" cy="427.4" r="0.9" fill="#fff"/>
 <circle cx="520.6" cy="430.4" r="0.9" fill="#fff"/>
 <rect x="522" y="424" width="4" height="0.7" fill="#1a5a90"/><rect x="522" y="427" width="4" height="0.7" fill="#1a5a90"/><rect x="522" y="430" width="4" height="0.7" fill="#1a5a90"/>
 <!-- BOM icon -->
 <defs><linearGradient id="gred" x1="0" y1="0" x2="1" y2="0"><stop offset="0" stop-color="#c04848"/><stop offset="0.5" stop-color="#9a3030"/><stop offset="1" stop-color="#5a0a0a"/></linearGradient></defs>
 <path d="M515.2 530.7 L525.9 526.8 L525.9 543.6 L515.2 548.3 Z" fill="url(#gred)"/>
 <path d="M525.9 526.8 L538.6 528.2 L538.6 546.5 L525.9 543.6 Z" fill="#e6e8ea" stroke="#888" stroke-width="0.4"/>
 <g stroke="#9a9a9a" stroke-width="0.6"><path d="M527 530 L537 531.2 M527 532.6 L537 533.8 M527 535.2 L537 536.4 M527 537.8 L537 539 M527 540.4 L537 541.6"/></g>
 <rect x="536.3" y="530" width="2.4" height="3.6" fill="#d02020"/>
 <rect x="536.8" y="534" width="2.4" height="3.6" fill="#20c030"/>
 <rect x="537.2" y="538" width="2.4" height="3" fill="#f08030"/>
 <rect x="538" y="541.5" width="2.4" height="3.4" fill="#0010e0"/>
</svg>
<svg class="a" style="left:490px;top:668px" width="22" height="22" viewBox="490 668 22 22">
 <path d="M494.5 679 L497 676.6 L499.6 679.4 L505.4 673.8 L508 676.2 L499.6 684.8 Z" fill="#5ed82a" stroke="#168a10" stroke-width="0.9" stroke-linejoin="round"/>
 <path d="M500.5 679.5 L505.5 674.8" stroke="#d8f8c8" stroke-width="1.2"/>
</svg>

</body></html>
